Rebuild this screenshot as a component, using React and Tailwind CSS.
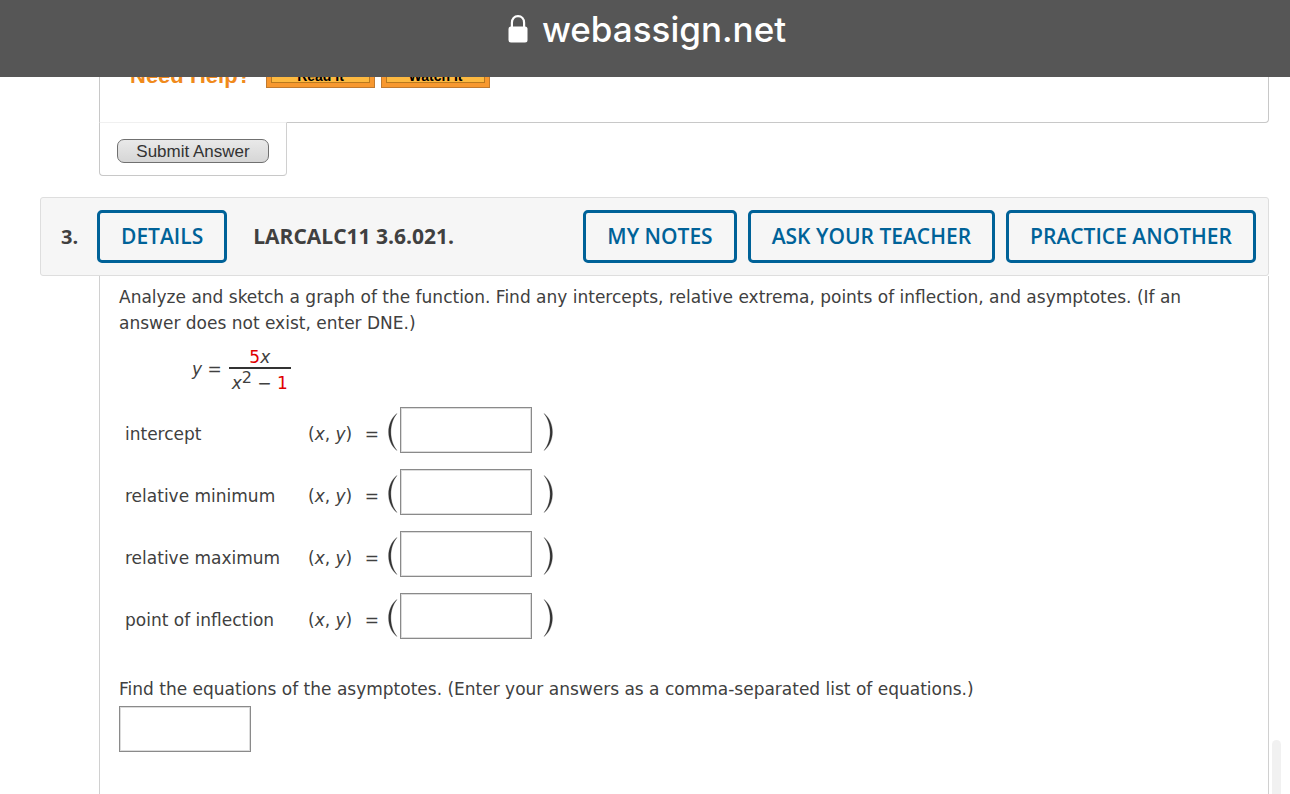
const answers = [
  { id: "intercept", label: "intercept" },
  { id: "rel-min", label: "relative minimum" },
  { id: "rel-max", label: "relative maximum" },
  { id: "inflection", label: "point of inflection" },
];

const inputClass =
  "h-[46px] w-[132px] border border-[#8a8a8a] bg-white px-2 outline-none shadow-[inset_0_0_0_1px_#dcdcdc]";

function LockIcon() {
  return (
    <svg className="h-7 w-5" viewBox="0 0 20 28" fill="none" aria-hidden="true">
      <path d="M3.9 13V7.8C3.9 3.8 6.3 1.2 10 1.2S16.1 3.8 16.1 7.8V13" stroke="white" strokeWidth="2.2" />
      <rect x="0.5" y="11.5" width="19" height="16" rx="2.5" fill="white" />
    </svg>
  );
}

function LeftParen() {
  return (
    <svg className="h-10 w-[11px]" viewBox="0 0 11 40" aria-hidden="true">
      <path d="M10 1.5C-1.2 10 -1.2 30 10 38.5C1.8 29 1.8 11 10 1.5Z" fill="#333" stroke="#333" strokeWidth="0.3" />
    </svg>
  );
}

function RightParen() {
  return (
    <svg className="h-10 w-[11px]" viewBox="0 0 11 40" aria-hidden="true">
      <path d="M1 1.5C12.2 10 12.2 30 1 38.5C9.2 29 9.2 11 1 1.5Z" fill="#333" stroke="#333" strokeWidth="0.3" />
    </svg>
  );
}

function OutlineButton({ children }) {
  return (
    <button
      type="button"
      className="h-[53px] shrink-0 whitespace-nowrap rounded-[5px] border-3 border-[#006298] px-[21px] pt-px text-[21px] font-semibold text-[#006298] [font-family:'Open_Sans','Noto_Sans',sans-serif]"
    >
      {children}
    </button>
  );
}

function HelpButton({ children }) {
  return (
    <button
      type="button"
      className="h-8 w-[109px] border border-[#c07a30] bg-[#f7982f] p-1 text-[14px] font-bold text-black"
    >
      <span className="flex h-full items-end justify-center border border-[#b9791f] bg-[#fdb940] leading-3">
        {children}
      </span>
    </button>
  );
}

export default function App() {
  return (
    <div className="relative flex h-screen flex-col overflow-hidden bg-white text-[17px] text-[#404040] [font-family:'DejaVu_Sans',Verdana,sans-serif]">
      {/* Address bar */}
      <header className="flex h-[77px] shrink-0 items-start justify-center gap-[14px] bg-[#565656] pt-[9px] pl-1 text-white [font-family:Inter,sans-serif]">
        <div className="pt-[6px]">
          <LockIcon />
        </div>
        <span className="text-[35px] leading-10 font-medium">webassign.net</span>
      </header>

      <main className="flex min-h-0 flex-1 flex-col pr-[21px] pl-10 [&>*]:shrink-0">
        {/* Previous question, scrolled under the bar */}
        <section className="ml-[59px] flex h-[46px] flex-col justify-end overflow-hidden rounded-br border-r border-b border-l border-[#c8c8c8] pb-[34px] pl-[30px] [font-family:'Liberation_Sans',Arial,sans-serif]">
          <div className="flex h-8 items-end">
            <span className="w-[136px] text-[22px] leading-6 font-bold text-[#f08a1c]">Need Help?</span>
            <div className="flex gap-[6px]">
              <HelpButton>Read It</HelpButton>
              <HelpButton>Watch It</HelpButton>
            </div>
          </div>
        </section>
        <div className="relative -mt-px ml-[59px] w-[188px] rounded-b border border-t-[#f0f0f0] border-r-[#d0d0d0] border-b-[#c8c8c8] border-l-[#c8c8c8] bg-white px-[17px] pt-4 pb-3">
          <button
            type="button"
            className="block h-6 w-full rounded-[7px] border border-[#707070] bg-linear-to-b from-[#e9e9e9] to-[#d6d6d6] text-[17px] leading-6 text-[#333] [font-family:'Liberation_Sans',Arial,sans-serif]"
          >
            Submit Answer
          </button>
        </div>

        {/* Question header */}
        <div className="mt-[21px] flex h-[79px] items-center rounded-[3px] border border-[#dedede] bg-[#f6f6f6] pr-3 pl-5 [font-family:'Open_Sans','Noto_Sans',sans-serif]">
          <span className="w-9 text-[20px] font-bold">3.</span>
          <OutlineButton>DETAILS</OutlineButton>
          <h1 className="ml-[26px] flex-1 pt-px text-[21px] font-bold whitespace-nowrap">LARCALC11 3.6.021.</h1>
          <div className="flex gap-[11px]">
            <OutlineButton>MY NOTES</OutlineButton>
            <OutlineButton>ASK YOUR TEACHER</OutlineButton>
            <OutlineButton>PRACTICE ANOTHER</OutlineButton>
          </div>
        </div>

        {/* Question body */}
        <section className="ml-[59px] flex-1 border-x border-[#d0d0d0] pt-2 pl-[19px]">
          <p className="pr-14 leading-[26px]">
            Analyze and sketch a graph of the function. Find any intercepts, relative extrema, points of inflection,
            and asymptotes. (If an answer does not exist, enter DNE.)
          </p>

          <div className="mt-[9px] ml-[73px] flex h-[50px] items-center gap-[7px]">
            <span>
              <i>y</i> =
            </span>
            <span className="flex flex-col items-center leading-5">
              <span>
                <span className="text-[#e00000]">5</span>
                <i>x</i>
              </span>
              <span className="border-t-2 border-[#333] px-[3px] pt-1 whitespace-nowrap">
                <i>x</i>
                <sup className="-top-1.5 text-[16px]">2</sup> − <span className="text-[#e00000]">1</span>
              </span>
            </span>
          </div>

          <div className="mt-[12px] ml-[6px] flex flex-col gap-4">
            {answers.map(({ id, label }) => (
              <div key={id} className="flex h-[46px] items-center">
                <label htmlFor={id} className="w-[183px] pt-[10px]">
                  {label}
                </label>
                <span className="mr-2 flex w-[71px] justify-between pt-[10px] whitespace-nowrap">
                  <span>
                    (<i>x</i>, <i>y</i>)
                  </span>
                  <span>=</span>
                </span>
                <span className="mr-[2px] pt-1">
                  <LeftParen />
                </span>
                <input id={id} type="text" className={inputClass} />
                <span className="ml-[11px] pt-1">
                  <RightParen />
                </span>
              </div>
            ))}
          </div>

          <label htmlFor="asymptotes" className="mt-[37px] block leading-[26px]">
            Find the equations of the asymptotes. (Enter your answers as a comma-separated list of equations.)
          </label>
          <input id="asymptotes" type="text" className={`mt-1 block ${inputClass}`} />
        </section>
      </main>

      {/* Scrollbar thumb */}
      <div className="absolute right-[9px] bottom-0 h-[54px] w-[9px] rounded-t-full bg-[#f1f1f1]" />
    </div>
  );
}
